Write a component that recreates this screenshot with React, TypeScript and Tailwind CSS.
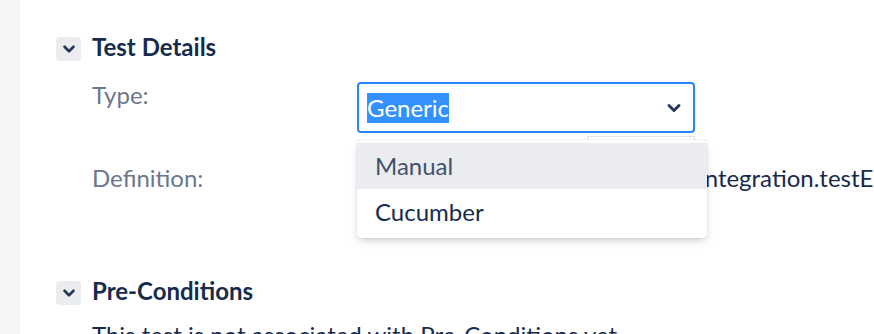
import { ChevronDown } from "lucide-react";

const options = ["Manual", "Cucumber"];

function SectionHeading({ title }: { title: string }) {
  return (
    <div className="flex items-start gap-[11px]">
      <button
        type="button"
        className="mt-[6px] flex h-[24px] w-[25px] items-center justify-center rounded-[4px] bg-[#ebecf0] text-[#253858]"
      >
        <ChevronDown size={18} strokeWidth={3.5} />
      </button>
      <h2 className="text-[24px] font-bold leading-[32px] text-[#172b4d]">{title}</h2>
    </div>
  );
}

export default function App() {
  return (
    <div className="flex h-[334px] w-[874px] overflow-hidden bg-white font-['Lato','Noto_Sans',sans-serif]">
      <div className="w-[20px] shrink-0 bg-[#f4f5f7]" />
      <div className="min-w-0 flex-1 overflow-hidden pl-[36px] pt-[31px]">
        <SectionHeading title="Test Details" />

        <div className="mt-[19px] flex pl-[36px]">
          <div className="w-[265px] shrink-0 text-[24px] leading-[26px] text-[#6b778c]">Type:</div>
          <div className="relative">
            <div className="flex h-[51px] w-[338px] items-center justify-between rounded-[4px] border-2 border-[#2684ff] bg-white pl-[8px] pr-[9px]">
              <span className="bg-[#3390ff] text-[24px] leading-[30px] text-white">Generic</span>
              <ChevronDown size={20} strokeWidth={3.5} className="text-[#253858]" />
            </div>
            <div className="absolute left-[230px] top-[54px] h-[40px] w-[108px] border-x border-t border-[#dfe1e6]" />
            <div className="absolute left-0 top-[58px] z-10 w-[350px] rounded-[4px] bg-white py-[3px] shadow-[0_4px_8px_-2px_rgba(9,30,66,0.25),0_0_1px_rgba(9,30,66,0.31)]">
              {options.map((opt, i) => (
                <div
                  key={opt}
                  className={
                    i === 0
                      ? "flex h-[46px] items-center bg-[#ebecf0] pl-[18px] text-[24px] text-[#42526e]"
                      : "flex h-[46px] items-center pl-[18px] text-[24px] text-[#172b4d]"
                  }
                >
                  {opt}
                </div>
              ))}
            </div>
          </div>
        </div>

        <div className="mt-[29px] flex pl-[36px]">
          <div className="w-[265px] shrink-0 text-[24px] leading-[32px] text-[#6b778c]">Definition:</div>
          <div className="whitespace-nowrap text-[24px] leading-[32px] text-[#172b4d]">
            com.xpandit.plugins.xray.testing.integration.testExample
          </div>
        </div>

        <div className="mt-[81px]">
          <SectionHeading title="Pre-Conditions" />
        </div>

        <p className="mt-[12px] pl-[36px] text-[24px] leading-[32px] text-[#172b4d]">
          This test is not associated with Pre-Conditions yet.
        </p>
      </div>
    </div>
  );
}
